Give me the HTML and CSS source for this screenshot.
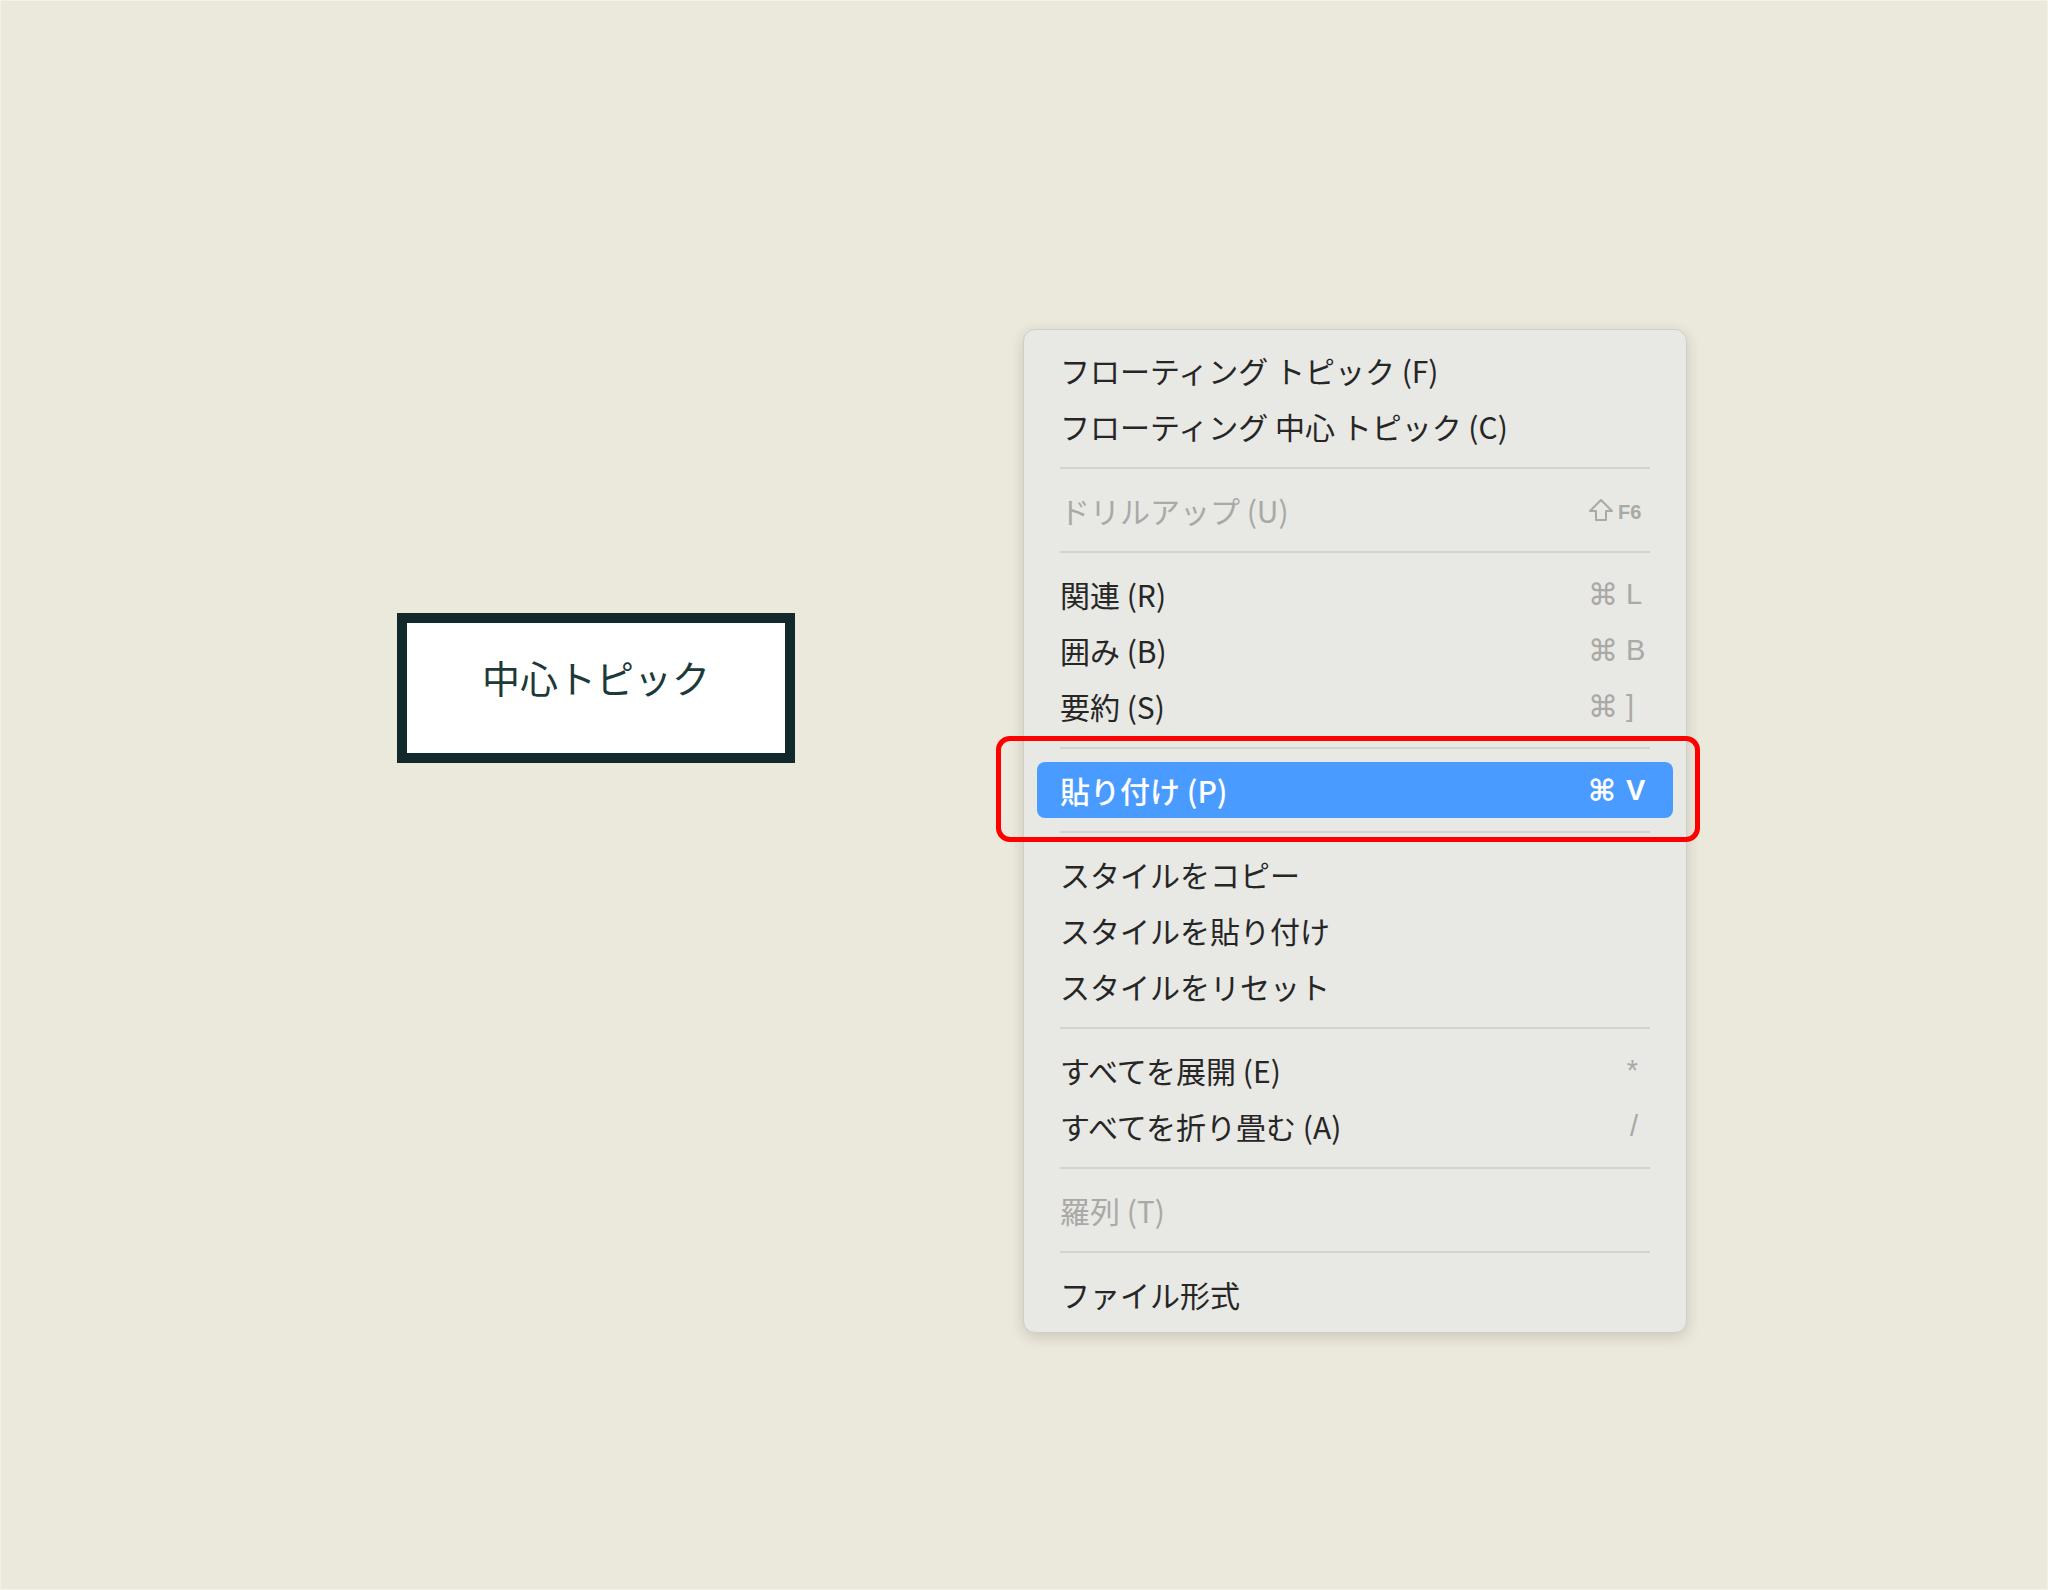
FILE: index.html
```html
<!DOCTYPE html>
<html lang="ja">

<head>
  <meta charset="UTF-8">
  <meta name="viewport" content="width=device-width, initial-scale=1.0">
  <title>中心トピック</title>
  <link rel="stylesheet" href="styles.css">
</head>

<body>
  <div class="canvas">
    <!-- Mind map node -->
    <div class="topic">中心トピック</div>

    <!-- Context menu -->
    <ul class="menu">
      <li class="item"><span>フローティング トピック (F)</span></li>
      <li class="item"><span>フローティング 中心 トピック (C)</span></li>
      <li class="sep"></li>
      <li class="item disabled"><span>ドリルアップ (U)</span><span class="key"><svg class="shift" width="26" height="24" viewBox="0 0 26 24"><path d="M13 2 L24 13 L18 13 L18 22 L8 22 L8 13 L2 13 Z" fill="none" stroke="currentColor" stroke-width="2" stroke-linejoin="round"/></svg><span class="fkey">F6</span></span></li>
      <li class="sep"></li>
      <li class="item"><span>関連 (R)</span><span class="key"><span class="sym">⌘</span>L</span></li>
      <li class="item"><span>囲み (B)</span><span class="key"><span class="sym">⌘</span>B</span></li>
      <li class="item"><span>要約 (S)</span><span class="key"><span class="sym">⌘</span>]</span></li>
      <li class="sep"></li>
      <li class="item active"><span>貼り付け (P)</span><span class="key"><span class="sym">⌘</span>V</span><span class="callout"></span></li>
      <li class="sep"></li>
      <li class="item"><span>スタイルをコピー</span></li>
      <li class="item"><span>スタイルを貼り付け</span></li>
      <li class="item"><span>スタイルをリセット</span></li>
      <li class="sep"></li>
      <li class="item"><span>すべてを展開 (E)</span><span class="key end">*</span></li>
      <li class="item"><span>すべてを折り畳む (A)</span><span class="key end">/</span></li>
      <li class="sep"></li>
      <li class="item disabled"><span>羅列 (T)</span></li>
      <li class="sep"></li>
      <li class="item"><span>ファイル形式</span></li>
    </ul>
  </div>
</body>

</html>
```

FILE: styles.css
```css
/* Basic reset */
body {
  margin: 0;
  font-family: "Noto Sans CJK JP", "Noto Sans", sans-serif;
  background-color: #ebe8dc;
}

/* Mind map canvas */
.canvas {
  position: relative;
  width: 2048px;
  height: 1590px;
  box-sizing: border-box;
  border: 1px solid #f3f1ea;
  overflow: hidden;
}

/* Central topic node */
.topic {
  position: absolute;
  left: 396px;
  top: 612px;
  width: 398px;
  height: 150px;
  box-sizing: border-box;
  border: 10px solid #11292a;
  background-color: #ffffff;
  color: #1d3a3a;
  font-size: 38px;
  display: flex;
  align-items: center;
  justify-content: center;
  padding-bottom: 24px;
}

/* Context menu */
.menu {
  position: absolute;
  left: 1022px;
  top: 328px;
  width: 664px;
  box-sizing: border-box;
  margin: 0;
  padding: 12px 13px 10px;
  list-style: none;
  background-color: #e8e8e4;
  border: 1px solid #cfcfca;
  border-radius: 12px;
  box-shadow: 0 4px 14px rgba(60, 55, 40, 0.18);
}

.item {
  position: relative;
  height: 56px;
  padding: 0 23px;
  display: flex;
  align-items: center;
  justify-content: space-between;
  font-size: 30px;
  color: #262626;
  white-space: nowrap;
}

.item.disabled {
  color: #a9a9a6;
}

.item.active {
  background-color: #4a9bff;
  border-radius: 8px;
  color: #ffffff;
  font-weight: 500;
}

/* Shortcut column */
.key {
  width: 62px;
  color: #a9a9a6;
  font-family: "Liberation Sans", "DejaVu Sans", sans-serif;
  font-size: 29px;
  display: flex;
  align-items: center;
}

.key.end {
  justify-content: flex-end;
  padding-right: 12px;
  box-sizing: border-box;
}

.key .sym {
  width: 38px;
  font-family: "DejaVu Sans", sans-serif;
  font-size: 30px;
}

.key .shift {
  margin-right: 4px;
}

.key .fkey {
  font-size: 20px;
  font-weight: bold;
  padding-top: 4px;
}

.item.active .key {
  color: #ffffff;
  font-weight: bold;
}

/* Separator */
.sep {
  height: 2px;
  margin: 13px 23px;
  background-color: #d2d2ce;
}

/* Red annotation around the highlighted item */
.callout {
  position: absolute;
  left: -41px;
  right: -27px;
  top: -26px;
  bottom: -24px;
  border: 5px solid #ff0000;
  border-radius: 14px;
}
```
